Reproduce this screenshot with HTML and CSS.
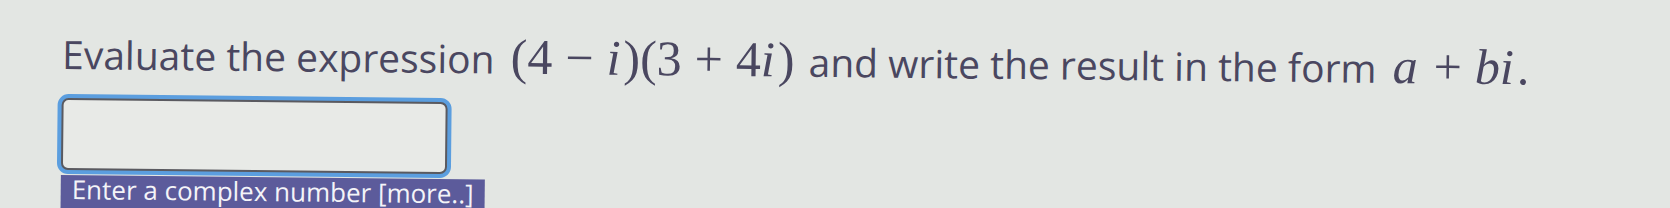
FILE: index.html
```html
<!DOCTYPE html>
<html lang="en">
<head>
<meta charset="utf-8">
<title>Complex number question</title>
<link rel="stylesheet" href="styles.css">
</head>
<body>
<main class="page">
  <p class="question">Evaluate the expression <span class="math"><span class="m-paren">(</span>4<span class="m-op">−</span><i>i</i><span class="m-paren">)</span><span class="m-paren">(</span>3<span class="m-op">+</span>4<i>i</i><span class="m-paren">)</span></span> and write the result in the form <span class="math"><i>a</i><span class="m-op">+</span><i>bi</i>.</span></p>
  <div class="answer-wrap">
    <div class="answer" role="textbox" aria-label="answer"></div>
    <div class="hint">Enter a complex number [more..]</div>
  </div>
</main>
</body>
</html>
```

FILE: styles.css
```css
html, body {
  margin: 0;
  padding: 0;
}
body {
  background: #e3e6e3;
  width: 1670px;
  height: 208px;
  overflow: hidden;
}
.page {
  padding: 27px 0 0 62px;
  font-family: "Open Sans", "Liberation Sans", sans-serif;
  color: #4a4760;
  transform: rotate(0.6deg);
  transform-origin: 62px 68px;
}
.question {
  margin: 0;
  font-size: 39px;
  line-height: 50px;
  white-space: nowrap;
}
.math {
  font-family: "Liberation Serif", "DejaVu Serif", serif;
  font-size: 50px;
  line-height: 1;
  margin: 0 4px 0 6px;
}
.math i {
  font-style: italic;
  padding-right: 3px;
}
.m-op {
  padding: 0 13px;
}
.answer-wrap {
  margin-top: 19px;
  display: flex;
  flex-direction: column;
  align-items: flex-start;
}
.answer {
  width: 382px;
  height: 68px;
  border: 2px solid #5a5a60;
  border-radius: 7px;
  background: #e8eae7;
  box-shadow: 0 0 0 4px #5b9edf;
}
.hint {
  margin-top: 5px;
  background: #5c5b9b;
  color: #f4f4f8;
  font-size: 26px;
  line-height: 29px;
  padding: 0 11px 8px;
  white-space: nowrap;
}
```
